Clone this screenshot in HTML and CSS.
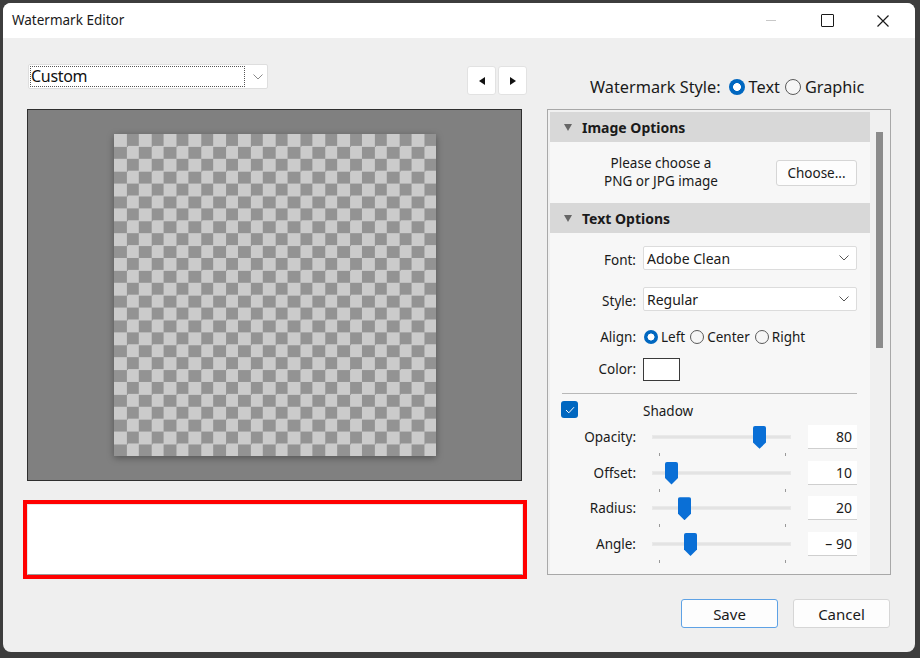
FILE: index.html
```html
<!DOCTYPE html>
<html>
<head>
<meta charset="utf-8">
<link rel="stylesheet" href="styles.css">
</head>
<body>
<div class="window">
  <div class="titlebar">
    <div class="title">Watermark Editor</div>
    <div class="controls">
      <span class="ctl min"></span>
      <span class="ctl max"></span>
      <span class="ctl close">
        <svg width="12" height="12" viewBox="0 0 12 12"><path d="M0.5 0.5L11.5 11.5M11.5 0.5L0.5 11.5" stroke="#1a1a1a" stroke-width="1.2" fill="none"/></svg>
      </span>
    </div>
  </div>
  <div class="main">
    <div class="left">
      <div class="toprow">
        <div class="combo">
          <div class="combo-text">Custom</div>
          <svg class="chev" width="10" height="6" viewBox="0 0 10 6"><path d="M0.5 0.5L5 5L9.5 0.5" stroke="#8a8a8a" fill="none"/></svg>
        </div>
        <div class="nav">
          <button class="navbtn"><svg width="6" height="8" viewBox="0 0 6 8"><path d="M6 0V8L0 4Z" fill="#111"/></svg></button>
          <button class="navbtn"><svg width="6" height="8" viewBox="0 0 6 8"><path d="M0 0V8L6 4Z" fill="#111"/></svg></button>
        </div>
      </div>
      <div class="preview">
        <div class="checker"></div>
      </div>
      <div class="textbox"><div class="textbox-inner"></div></div>
    </div>
    <div class="right">
      <div class="stylerow">
        <span class="stylelabel">Watermark Style:</span>
        <span class="radio on big"></span><span class="rlabel">Text</span>
        <span class="radio big"></span><span class="rlabel">Graphic</span>
      </div>
      <div class="panel">
        <div class="content">
          <div class="header"><span class="tri"></span>Image Options</div>
          <div class="imgopts">
            <div class="imgtext">Please choose a<br>PNG or JPG image</div>
            <button class="btn choose">Choose...</button>
          </div>
          <div class="header"><span class="tri"></span>Text Options</div>
          <div class="row r-font">
            <span class="lbl">Font:</span>
            <div class="select"><span>Adobe Clean</span><svg width="10" height="6" viewBox="0 0 10 6"><path d="M0.5 0.5L5 5L9.5 0.5" stroke="#555" fill="none"/></svg></div>
          </div>
          <div class="row r-style">
            <span class="lbl">Style:</span>
            <div class="select"><span>Regular</span><svg width="10" height="6" viewBox="0 0 10 6"><path d="M0.5 0.5L5 5L9.5 0.5" stroke="#555" fill="none"/></svg></div>
          </div>
          <div class="row r-align">
            <span class="lbl">Align:</span>
            <span class="radio on"></span><span class="alabel">Left</span>
            <span class="radio"></span><span class="alabel">Center</span>
            <span class="radio"></span><span class="alabel">Right</span>
          </div>
          <div class="row r-color">
            <span class="lbl">Color:</span>
            <span class="swatch"></span>
          </div>
          <div class="sep"></div>
          <div class="row r-shadow">
            <span class="check"><svg width="10" height="8" viewBox="0 0 10 8"><path d="M1 4L3.8 6.8L9 1.2" stroke="#fff" stroke-width="1" fill="none"/></svg></span>
            <span class="shadowlbl">Shadow</span>
          </div>
          <div class="row slider-row">
            <span class="lbl">Opacity:</span>
            <div class="slider"><div class="track"></div><div class="thumb" style="left:101px"></div><span class="tick t1"></span><span class="tick t2"></span></div>
            <div class="val">80</div>
          </div>
          <div class="row slider-row">
            <span class="lbl">Offset:</span>
            <div class="slider"><div class="track"></div><div class="thumb" style="left:13px"></div><span class="tick t1"></span><span class="tick t2"></span></div>
            <div class="val">10</div>
          </div>
          <div class="row slider-row">
            <span class="lbl">Radius:</span>
            <div class="slider"><div class="track"></div><div class="thumb" style="left:26px"></div><span class="tick t1"></span><span class="tick t2"></span></div>
            <div class="val">20</div>
          </div>
          <div class="row slider-row">
            <span class="lbl">Angle:</span>
            <div class="slider"><div class="track"></div><div class="thumb" style="left:32px"></div><span class="tick t1"></span><span class="tick t2"></span></div>
            <div class="val">– 90</div>
          </div>
        </div>
        <div class="scroll"><div class="thumbbar"></div></div>
      </div>
    </div>
  </div>
  <div class="footer">
    <button class="btn fbtn save">Save</button>
    <button class="btn fbtn">Cancel</button>
  </div>
</div>
</body>
</html>
```
FILE: styles.css
```css
* { box-sizing: border-box; }
html, body { margin: 0; padding: 0; }
body {
  width: 920px;
  height: 658px;
  background: #3d3d3d;
  font-family: "Noto Sans", "DejaVu Sans", sans-serif;
  color: #1a1a1a;
  overflow: hidden;
  padding: 3px 0 0 3px;
}
.window {
  width: 912px;
  height: 649px;
  background: #efefef;
  border-radius: 8px;
  overflow: hidden;
}
.titlebar {
  height: 35px;
  background: #ffffff;
  display: flex;
  align-items: center;
  justify-content: space-between;
}
.title {
  font-size: 13.5px;
  padding-left: 9px;
  padding-bottom: 1px;
}
.controls { display: flex; align-items: center; height: 100%; }
.ctl { display: flex; align-items: center; justify-content: center; width: 57px; height: 100%; }
.ctl.min::before { content: ""; display: block; width: 10px; height: 1px; background: #c8c8c8; }
.ctl.max::before { content: ""; display: block; width: 11px; height: 11px; border: 1.2px solid #1a1a1a; border-radius: 1px; }
.ctl.close { width: 59px; padding-right: 6px; }

.main {
  display: flex;
  align-items: flex-start;
  padding: 26px 0 0 20px;
  height: 540px;
}
.left { width: 504px; display: flex; flex-direction: column; }
.toprow {
  height: 31px;
  display: flex;
  justify-content: space-between;
  align-items: flex-start;
}
.combo {
  margin-left: 5px;
  width: 240px;
  height: 25px;
  background: #fff;
  border: 1px solid #dedede;
  border-radius: 2px;
  display: flex;
  align-items: center;
  padding: 1px;
}
.combo-text {
  width: 215px;
  height: 21px;
  border: 1px dotted #555;
  font-size: 16px;
  line-height: 19px;
  padding-left: 0;
  color: #111;
  letter-spacing: -0.3px;
}
.chev { margin-left: 8px; }
.nav { display: flex; gap: 2px; padding-top: 2px; }
.navbtn {
  width: 29px;
  height: 29px;
  background: #fff;
  border: 1px solid #e2e2e2;
  border-radius: 3px;
  display: flex;
  align-items: center;
  justify-content: center;
  padding: 0;
}
.preview {
  margin: 14px 5px 0 4px;
  height: 372px;
  background: #808080;
  border: 1px solid #2f2f2f;
  display: flex;
  justify-content: center;
  align-items: flex-start;
  padding: 24px 0 0 0;
}
.checker {
  width: 322px;
  height: 322px;
  background-color: #cbcbcb;
  background-image: conic-gradient(#939393 25%, #cbcbcb 25% 50%, #939393 50% 75%, #cbcbcb 75%);
  background-size: 24.8px 24.8px;
  box-shadow: 0 2px 7px rgba(0, 0, 0, 0.35);
}
.textbox {
  margin-top: 19px;
  height: 79px;
  border: 4px solid #ff0000;
  background: #fff;
}
.textbox-inner {
  height: 100%;
  border: 1px solid #e6e6e6;
  border-bottom: 1px solid #9a9a9a;
}

.right { margin-left: 20px; width: 344px; display: flex; flex-direction: column; }
.stylerow {
  height: 45px;
  display: flex;
  align-items: center;
  padding: 0 0 0 43px;
  font-size: 16.3px;
}
.stylelabel { margin-right: 8px; }
.rlabel { margin: 0 5px 0 4px; }

.radio {
  width: 14px;
  height: 14px;
  border-radius: 50%;
  border: 1px solid #5a5a5a;
  background: #f6f6f6;
  flex: none;
}
.radio.big { width: 16px; height: 16px; }
.radio.on {
  border: none;
  background: radial-gradient(circle, #fff 0 3.2px, #0067c0 3.8px);
}
.radio.big.on { background: radial-gradient(circle, #fff 0 3.6px, #0067c0 4.2px); }

.panel {
  height: 466px;
  border: 1px solid #a8a8a8;
  background: #f0f0f0;
  display: flex;
  padding: 2px 0 0 2px;
}
.content {
  width: 320px;
  background: #f7f7f7;
  display: flex;
  flex-direction: column;
  font-size: 13.5px;
}
.scroll { flex: 1; padding: 20px 0 0 6px; }
.thumbbar { width: 7px; height: 216px; background: #8b8b8b; }
.header {
  height: 30px;
  background: #d8d8d8;
  display: flex;
  align-items: center;
  font-weight: bold;
  font-size: 14px;
  padding-left: 14px;
  flex: none;
}
.tri {
  width: 0; height: 0;
  border-left: 4px solid transparent;
  border-right: 4px solid transparent;
  border-top: 7px solid #666;
  margin-right: 10px;
}
.imgopts {
  height: 61px;
  display: flex;
  align-items: center;
  flex: none;
}
.imgtext {
  width: 222px;
  text-align: center;
  line-height: 18px;
  font-size: 13.5px;
  padding-bottom: 1px;
}
.btn {
  font-family: inherit;
  background: #fdfdfd;
  border: 1px solid #d6d6d6;
  border-radius: 3px;
  color: #1a1a1a;
}
.choose {
  width: 81px;
  height: 26px;
  font-size: 13.5px;
  margin-left: 4px;
}
.row { display: flex; align-items: center; flex: none; }
.lbl {
  width: 86px;
  text-align: right;
  margin-right: 7px;
  flex: none;
}
.r-font { margin-top: 13px; height: 24px; }
.r-style { margin-top: 17px; height: 24px; }
.select {
  width: 214px;
  height: 24px;
  background: #fff;
  border: 1px solid #dcdcdc;
  border-radius: 2px;
  display: flex;
  align-items: center;
  justify-content: space-between;
  padding: 0 7px 0 3px;
  font-size: 14px;
}
.r-font .lbl, .r-style .lbl { padding-top: 3px; }
.r-align { margin-top: 14px; height: 24px; }
.r-align .radio { margin-right: 3px; margin-left: 1px; }
.alabel { margin-right: 4px; }
.r-color { margin-top: 10px; height: 22px; }
.r-color .lbl { padding-bottom: 2px; }
.swatch {
  width: 37px;
  height: 23px;
  background: #fff;
  border: 1px solid #3a3a3a;
  margin-top: -2px;
}
.sep {
  margin: 12px 0 0 12px;
  width: 295px;
  height: 1px;
  background: #b8b8b8;
  flex: none;
}
.r-shadow { margin-top: 7px; height: 17px; }
.check {
  margin-left: 11px;
  width: 17px;
  height: 17px;
  border-radius: 3px;
  background: #0067c0;
  display: flex;
  align-items: center;
  justify-content: center;
}
.shadowlbl { margin-left: 65px; margin-top: 3px; }
.slider-row { height: 35.7px; }
.r-shadow + .slider-row { margin-top: 1px; }
.slider {
  position: relative;
  width: 141px;
  height: 36px;
  margin-left: 9px;
  margin-right: 15px;
}
.track {
  position: absolute;
  left: 0;
  top: 16px;
  width: 139px;
  height: 4px;
  background: #e3e3e3;
  border: 1px solid #e9e9e9;
}
.thumb {
  position: absolute;
  top: 7px;
  width: 13px;
  height: 23px;
  background: #0a6fd6;
  border-radius: 2px 2px 0 0;
  clip-path: polygon(0 0, 100% 0, 100% 72%, 50% 100%, 0 72%);
}
.tick {
  position: absolute;
  top: 34px;
  width: 1px;
  height: 3px;
  background: #999;
}
.tick.t1 { left: 7px; }
.tick.t2 { left: 133px; }
.val {
  width: 49px;
  height: 24px;
  background: #fff;
  border-bottom: 1px solid #cfcfcf;
  text-align: right;
  padding-right: 5px;
  line-height: 23px;
  font-size: 14px;
}
.footer {
  display: flex;
  justify-content: flex-end;
  gap: 15px;
  padding-right: 25px;
  margin-top: 21px;
}
.fbtn {
  width: 97px;
  height: 29px;
  font-size: 15px;
}
.save { border: 1px solid #5ea2e5; }
```
